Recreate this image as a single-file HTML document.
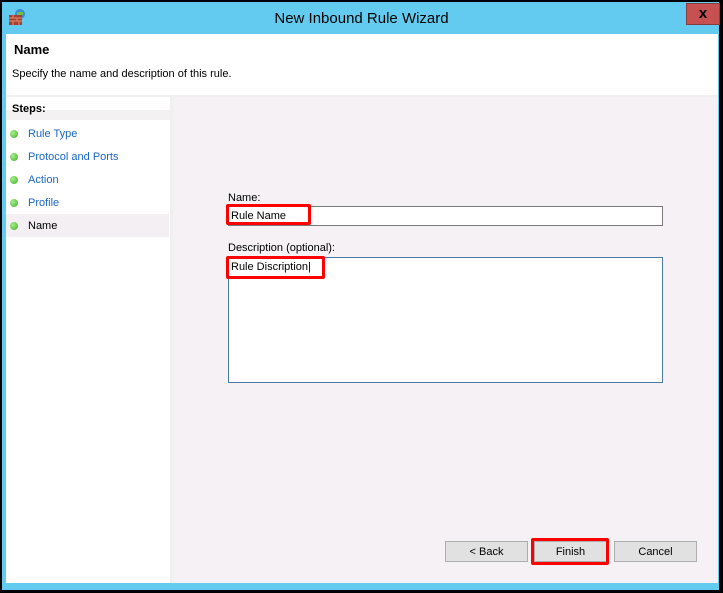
<!DOCTYPE html>
<html><head><style>
*{margin:0;padding:0;box-sizing:border-box}
body{width:723px;height:593px;background:#000;position:relative;overflow:hidden;font-family:"Liberation Sans",Tahoma,sans-serif;font-size:11px;color:#000}
.abs{position:absolute}
.title{left:2px;top:2px;width:717px;height:588px;background:#63cbef}
.client{left:6px;top:34px;width:712px;height:549px;background:#fff}
.t{white-space:nowrap}
.link{color:#1a66c8}
.dot{width:8px;height:8px;border-radius:50%;background:radial-gradient(circle at 35% 35%,#a8ef8a,#3fae2a)}
.btn{background:#e1e1e1;border:1px solid #adadad;text-align:center;line-height:20px;font-size:11px}
.red{border:3px solid #f00;border-radius:2px}
</style></head><body>
<div class="abs title"></div>
<div class="abs" style="left:686px;top:3px;width:34px;height:22px;background:#c75050;border:1px solid #8a3b3b;color:#000;font-weight:bold;font-size:15px;text-align:center;line-height:19px">x</div>
<svg class="abs" style="left:8px;top:8px" width="18" height="18"><circle cx="12" cy="6" r="5" fill="#3a8ad8"/><path d="M9 4h6v3h-6z" fill="#6cc04a"/><rect x="1" y="7" width="13" height="10" fill="#a8402e"/><path d="M1 10h13M1 13h13M5 7v3M9 10v3M5 13v4M11 13v4" stroke="#e08a70" stroke-width="1"/></svg>
<div class="abs t" style="left:0;width:723px;top:10px;text-align:center;font-size:15px;color:#000">New Inbound Rule Wizard</div>
<div class="abs client"></div>
<div class="abs t" style="left:14px;top:42px;font-size:13px;font-weight:bold">Name</div>
<div class="abs t" style="left:12px;top:68px">Specify the name and description of this rule.</div>
<div class="abs" style="left:6px;top:95px;width:712px;height:2px;background:#f0f0f0"></div>
<div class="abs" style="left:170px;top:97px;width:3px;height:486px;background:#f0f0f0"></div>
<div class="abs" style="left:173px;top:97px;width:545px;height:486px;background:#f5f1f4"></div>
<div class="abs" style="left:6px;top:110px;width:164px;height:10px;background:#f4f1f3"></div>
<div class="abs t" style="left:12px;top:103px;font-weight:bold">Steps:</div>
<div class="abs" style="left:6px;top:214px;width:163px;height:23px;background:#f3eff2"></div>
<div class="abs dot" style="left:10px;top:130px"></div><div class="abs t link" style="left:28px;top:128px">Rule Type</div>
<div class="abs dot" style="left:10px;top:153px"></div><div class="abs t link" style="left:28px;top:151px">Protocol and Ports</div>
<div class="abs dot" style="left:10px;top:176px"></div><div class="abs t link" style="left:28px;top:174px">Action</div>
<div class="abs dot" style="left:10px;top:199px"></div><div class="abs t link" style="left:28px;top:197px">Profile</div>
<div class="abs dot" style="left:10px;top:222px"></div><div class="abs t" style="left:28px;top:220px">Name</div>
<div class="abs t" style="left:228px;top:192px">Name:</div>
<div class="abs" style="left:228px;top:206px;width:435px;height:20px;background:#fff;border:1px solid #7a7a7a"></div>
<div class="abs red" style="left:226px;top:204px;width:85px;height:21px"></div>
<div class="abs t" style="left:231px;top:210px">Rule Name</div>
<div class="abs t" style="left:228px;top:242px">Description (optional):</div>
<div class="abs" style="left:228px;top:257px;width:435px;height:126px;background:#fff;border:1px solid #4a7aa8"></div>
<div class="abs red" style="left:226px;top:256px;width:99px;height:23px"></div>
<div class="abs t" style="left:231px;top:261px">Rule Discription|</div>
<div class="abs btn" style="left:445px;top:541px;width:83px;height:21px">&lt; Back</div>
<div class="abs btn" style="left:534px;top:541px;width:73px;height:21px">Finish</div>
<div class="abs red" style="left:531px;top:538px;width:78px;height:27px"></div>
<div class="abs btn" style="left:614px;top:541px;width:83px;height:21px">Cancel</div>
</body></html>
